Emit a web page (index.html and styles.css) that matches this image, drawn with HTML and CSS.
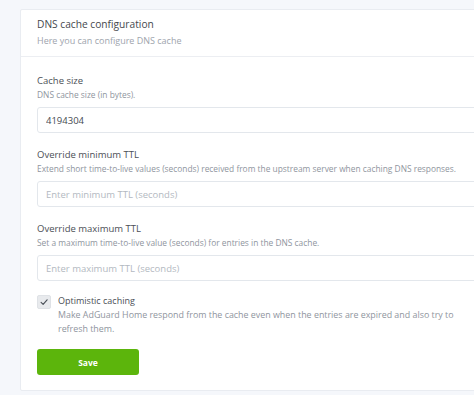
FILE: index.html
```html
<!DOCTYPE html>
<html lang="en">
<head>
<meta charset="utf-8">
<title>DNS cache configuration</title>
<link rel="stylesheet" href="styles.css">
</head>
<body>
<div class="page">
  <div class="card">
    <div class="card-header">
      <div class="card-title">DNS cache configuration</div>
      <div class="card-subtitle">Here you can configure DNS cache</div>
    </div>
    <div class="card-body">
      <div class="field">
        <div class="label">Cache size</div>
        <div class="desc">DNS cache size (in bytes).</div>
        <input class="input" type="text" value="4194304">
      </div>
      <div class="field">
        <div class="label">Override minimum TTL</div>
        <div class="desc">Extend short time-to-live values (seconds) received from the upstream server when caching DNS responses.</div>
        <input class="input" type="text" placeholder="Enter minimum TTL (seconds)">
      </div>
      <div class="field">
        <div class="label">Override maximum TTL</div>
        <div class="desc">Set a maximum time-to-live value (seconds) for entries in the DNS cache.</div>
        <input class="input" type="text" placeholder="Enter maximum TTL (seconds)">
      </div>
      <div class="check-row">
        <span class="checkbox">
          <svg width="14" height="14" viewBox="0 0 14 14"><polyline points="3.6,7.4 6,9.8 10.6,4.4" fill="none" stroke="#4a5058" stroke-width="1.3" stroke-linecap="round" stroke-linejoin="round"/></svg>
        </span>
        <div class="check-text">
          <div class="check-label">Optimistic caching</div>
          <div class="check-desc">Make AdGuard Home respond from the cache even when the entries are expired and also try to refresh them.</div>
        </div>
      </div>
      <button class="btn-save" type="button">Save</button>
    </div>
  </div>
</div>
</body>
</html>
```

FILE: styles.css
```css
html, body {
  margin: 0;
  padding: 0;
  overflow: hidden;
  background: #f5f7fb;
}

body {
  font-family: "Open Sans", "Noto Sans", sans-serif;
  width: 474px;
  height: 395px;
}

.page {
  padding: 9px 0 0 20px;
}

.card {
  width: 480px;
  background: #fff;
  border: 1px solid #e9ecf1;
  border-radius: 2px;
}

.card-header {
  padding: 5px 16px 8px;
  border-bottom: 1px solid #eceef2;
}

.card-title {
  font-size: 10.2px;
  line-height: 18px;
  color: #45484e;
}

.card-subtitle {
  margin-top: 1px;
  font-size: 9px;
  line-height: 14px;
  color: #9ea4ad;
}

.card-body {
  padding: 17px 16px 15px;
}

.field + .field {
  margin-top: 15px;
}

.label {
  font-size: 9.5px;
  line-height: 14px;
  color: #4b4f56;
}

.desc {
  font-size: 8.4px;
  line-height: 14px;
  color: #8f959e;
  white-space: nowrap;
}

.input {
  display: block;
  box-sizing: border-box;
  width: 100%;
  height: 26px;
  margin: 5px 0 0;
  padding: 0 8px;
  border: 1px solid #e3e7ec;
  border-radius: 3px;
  background: #fff;
  font-family: inherit;
  font-size: 9.5px;
  color: #454a51;
  outline: none;
}

.input::placeholder {
  color: #b3b9c1;
}

.check-row {
  display: flex;
  gap: 7px;
  margin-top: 13px;
}

.checkbox {
  flex: none;
  width: 14px;
  height: 14px;
  margin-top: 1px;
  box-sizing: border-box;
  background: #e8eaed;
  border: 1px solid #dfe2e6;
  border-radius: 2px;
  display: flex;
  align-items: center;
  justify-content: center;
}

.checkbox svg {
  display: block;
}

.check-text {
  width: 404px;
}

.check-label {
  font-size: 9px;
  line-height: 14px;
  color: #4b4f56;
}

.check-desc {
  font-size: 8.9px;
  line-height: 14px;
  color: #8f959e;
}

.btn-save {
  display: block;
  width: 102px;
  height: 26px;
  margin-top: 13px;
  padding: 0;
  border: none;
  border-radius: 3px;
  background: #5cb50c;
  color: #fff;
  font-family: inherit;
  font-size: 8.5px;
  font-weight: 700;
  cursor: pointer;
}
```
